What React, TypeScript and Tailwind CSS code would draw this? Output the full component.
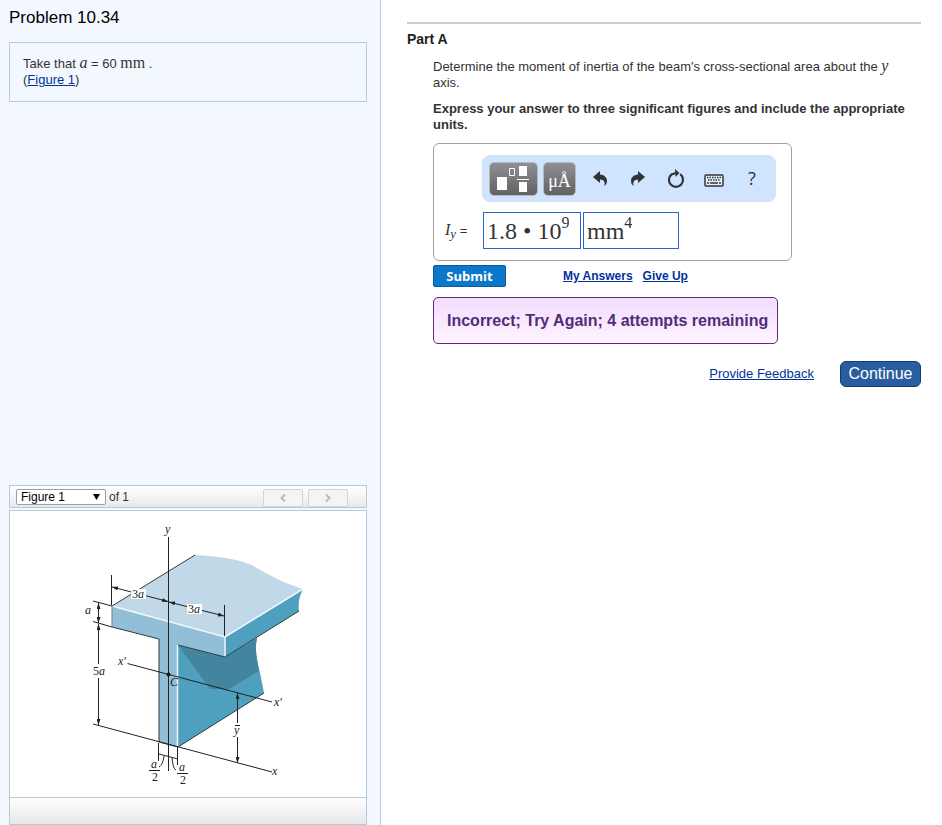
import type { ReactNode } from 'react'

const linkClass = 'text-[#003399] underline'

const MathText = ({ children }: { children: ReactNode }) => (
  <span className="font-['Liberation_Serif',serif] text-[16px] leading-none">{children}</span>
)

interface DimensionProps {
  x1: number
  y1: number
  x2: number
  y2: number
}

const Dimension = ({ x1, y1, x2, y2 }: DimensionProps) => (
  <line x1={x1} y1={y1} x2={x2} y2={y2} stroke="#222" markerStart="url(#arrow)" markerEnd="url(#arrow)" />
)

const BeamFigure = () => (
  <svg
    width="356"
    height="286"
    viewBox="10 511 356 286"
    role="img"
    aria-label="T-shaped beam cross section"
    className="mx-auto block font-['Liberation_Serif',serif] text-[12px]"
  >
    <defs>
      <marker id="arrow" viewBox="0 0 6 4" refX="6" refY="2" markerWidth="6" markerHeight="4" markerUnits="userSpaceOnUse" orient="auto-start-reverse">
        <path d="M0 0 6 2 0 4Z" fill="#222" />
      </marker>
    </defs>

    {/* web */}
    <path d="M178 645 225 657 257 638C254 651 258 664 260 673L264 693 178 747Z" fill="#4fa0bf" />
    <path d="M178 645 225 657 257 638C254 651 258 662 259 671L229 689 210 689Z" fill="#43859f" />
    <path d="M159 638H178V747L159 742Z" fill="#92bfd7" />
    {/* flange */}
    <path d="M112 606 225 636V657L178 645 159 639 112 627Z" fill="#92bfd7" />
    <path d="M225 636 303 589C299 597 298 603 299 611L225 657Z" fill="#4fa0bf" />
    <path d="M112 606 195 555C217 556 238 559 252 565C268 574 283 583 303 589L225 637Z" fill="#c0d8e7" />
    <path d="M112 606 225 637 303 589M225 637V657M177.500 645V747" fill="none" stroke="#f1f8fb" strokeWidth="1.500" />
    <path d="M112 606 195 555M112 627 159 639V742L178 747 264 693M178 645 225 657 299 611" fill="none" stroke="#333b40" />
    <path d="M112 606V627" stroke="#5f8595" />

    {/* axes */}
    <g stroke="#222" fill="none">
      <path d="M168.500 537V771M127.500 663.500 272 702M93 724 272 772" />
      <path d="M111.500 575V605M224.500 605V636M93 601 112 606M93 621.500 112 627" />
      <path d="M158.500 743V761M177.500 747V765M159 754 178 759" />
      <path d="M164 756C163 762 162 765 159 767M172 758C173 764 173 768 176 770" />
    </g>
    <Dimension x1={112} y1={587} x2={168} y2={601.5} />
    <Dimension x1={169} y1={602} x2={224} y2={616} />
    <Dimension x1={98.500} y1={603} x2={98.500} y2={623} />
    <Dimension x1={98.500} y1={624} x2={98.500} y2={725} />
    <Dimension x1={237.500} y1={693} x2={237.500} y2={763} />
    <circle cx="168.500" cy="674.500" r="2" fill="#111" />

    {/* gaps behind the labels */}
    <g fill="#fff">
      <rect x="131" y="589" width="15" height="10" />
      <rect x="187" y="604" width="15" height="10" />
      <rect x="92" y="664" width="14" height="14" />
      <rect x="233" y="723" width="10" height="14" />
    </g>

    <g fill="#222" fontStyle="italic">
      <text x="165" y="533">y</text>
      <text x="132" y="598"><tspan fontStyle="normal">3</tspan>a</text>
      <text x="188" y="613"><tspan fontStyle="normal">3</tspan>a</text>
      <text x="85" y="614">a</text>
      <text x="93" y="675"><tspan fontStyle="normal">5</tspan>a</text>
      <text x="118" y="665">x′</text>
      <text x="274" y="706">x′</text>
      <text x="272" y="775">x</text>
      <text x="170" y="686">C</text>
      <text x="234" y="734">y</text>
      <text x="151" y="768">a</text>
      <text x="152" y="781" fontStyle="normal">2</text>
      <text x="179" y="771">a</text>
      <text x="180" y="784" fontStyle="normal">2</text>
    </g>
    <path d="M149 770.500H160M177 773.500H188M235 725.500H240" stroke="#222" />
  </svg>
)

const ToolbarIcon = ({ label, children }: { label: string; children: ReactNode }) => (
  <button type="button" aria-label={label} className="flex h-[34px] w-[38px] items-center justify-center text-[#333]">
    {children}
  </button>
)

const AnswerToolbar = () => (
  <div className="flex h-[47px] items-center gap-[5px] rounded-lg border border-[#dcdfe4] bg-[#cee4ff] pr-1 pl-[6px]">
    <button
      type="button"
      aria-label="Templates"
      className="flex h-[34px] w-[49px] items-center justify-center rounded-[5px] border border-[#b8b8bd] bg-linear-to-b from-[#8f8f96] to-[#626264]"
    >
      <svg width="34" height="26" viewBox="0 0 34 26">
        <path d="M0 11h10v13H0zM22 0h8v10h-8zM22 16h8v10h-8z" fill="#fff" />
        <path d="M12.500 2.500h5v7h-5zM20 13.500h12" fill="none" stroke="#fff" />
      </svg>
    </button>
    <button
      type="button"
      aria-label="Symbols"
      className="h-[34px] w-[33px] rounded-[5px] border border-[#b8b8bd] bg-linear-to-b from-[#8f8f96] to-[#626264] pt-1 font-['Liberation_Serif',serif] text-[18px] leading-7 text-white"
    >
      μÅ
    </button>
    <div className="flex">
      <ToolbarIcon label="Undo">
        <svg width="14" height="16" viewBox="0 0 14 16" fill="currentColor">
          <path d="M0 6 7 0V3.500C11.500 4 14 6.500 14 10C14 12 13 14 11.500 15C12.300 11 11 8.700 7 8.500V12Z" />
        </svg>
      </ToolbarIcon>
      <ToolbarIcon label="Redo">
        <svg width="14" height="16" viewBox="0 0 14 16" fill="currentColor">
          <path d="M14 6 7 0V3.500C2.500 4 0 6.500 0 10C0 12 1 14 2.500 15C1.700 11 3 8.700 7 8.500V12Z" />
        </svg>
      </ToolbarIcon>
      <ToolbarIcon label="Reset">
        <svg width="18" height="20" viewBox="0 0 18 20">
          <path d="M13.200 5.200A7 7 0 1 1 4.500 5.400L9 4" fill="none" stroke="currentColor" strokeWidth="2.200" />
          <path d="M8 0 12.500 4 8.500 8Z" fill="currentColor" />
        </svg>
      </ToolbarIcon>
      <ToolbarIcon label="Keyboard shortcuts">
        <svg width="20" height="18" viewBox="0 0 20 18" fill="none" stroke="currentColor">
          <rect x="1" y="5" width="18" height="11" rx="1" fill="#e8f2ff" strokeWidth="1.500" />
          <path d="M3 7.500H17M4 10H16" strokeWidth="1.500" strokeDasharray="1.500 1" />
          <path d="M3 13H5M6 13H14M15 13H17" strokeWidth="1.500" />
        </svg>
      </ToolbarIcon>
      <ToolbarIcon label="Help">
        <span className="font-['Open_Sans',sans-serif] text-[18px]">?</span>
      </ToolbarIcon>
    </div>
  </div>
)

interface MathFieldProps {
  label: string
  base: string
  exponent: string
  className: string
}

const MathField = ({ label, base, exponent, className }: MathFieldProps) => (
  <div className={`flex h-[37px] items-start overflow-hidden border border-[#2b63c6] bg-white pl-[3px] font-['Liberation_Serif',serif] text-[#333] ${className}`}>
    <input aria-label={label} defaultValue={base} className="field-sizing-content h-[36px] min-w-0 text-[24px] leading-[36px] outline-none" />
    <input aria-label={`${label} exponent`} defaultValue={exponent} className="field-sizing-content h-[20px] min-w-0 text-[16px] leading-[20px] outline-none" />
  </div>
)

const ProblemPanel = () => (
  <aside className="flex w-[381px] shrink-0 flex-col border-r border-[#b9cbdd] bg-[#f3f8ff] pr-[13px] pl-[9px]">
    <h1 className="mt-2 text-[17px] leading-5 text-black">Problem 10.34</h1>
    <div className="mt-[14px] h-[60px] border border-[#b9cbdd] px-[13px] py-3">
      <p className="leading-4">
        Take that <MathText><i>a</i></MathText> = 60 <MathText>mm</MathText> .
        <br />
        (<a href="#figure" className={linkClass}>Figure 1</a>)
      </p>
    </div>

    <section id="figure" className="mt-auto pt-4">
      <div className="flex h-[23px] items-start justify-between border border-[#b3c9dc] bg-linear-to-b from-white to-[#e9e9e9] pt-[3px] pr-[18px] pl-[6px] text-[12px]">
        <div className="flex h-4 items-center gap-[3px]">
          <div className="relative">
            <select aria-label="Figure" className="block h-4 w-[90px] appearance-none rounded-[2px] border border-[#a0a0a0] bg-white pl-1 leading-[14px] text-black">
              <option>Figure 1</option>
            </select>
            <svg width="7" height="6" viewBox="0 0 7 6" className="pointer-events-none absolute top-[5px] right-[6px]">
              <path d="M0 0H7L3.500 6Z" />
            </svg>
          </div>
          <span>of 1</span>
        </div>
        <div className="flex gap-[5px]">
          <button type="button" aria-label="Previous figure" className="flex h-[18px] w-10 items-center justify-center rounded-[2px] border border-[#d4d4d4] bg-[#f4f4f4]">
            <svg width="6" height="8" viewBox="0 0 6 8" fill="none" stroke="#bbb" strokeWidth="2"><path d="M5 .5 1.500 4 5 7.500" /></svg>
          </button>
          <button type="button" aria-label="Next figure" className="flex h-[18px] w-10 items-center justify-center rounded-[2px] border border-[#d4d4d4] bg-[#f4f4f4]">
            <svg width="6" height="8" viewBox="0 0 6 8" fill="none" stroke="#bbb" strokeWidth="2"><path d="M1 .5 4.500 4 1 7.500" /></svg>
          </button>
        </div>
      </div>
      <div className="mt-[2px] border border-[#b3c9dc] bg-white">
        <BeamFigure />
        <div className="h-[27px] border-t border-[#b3c9dc] bg-linear-to-b from-white to-[#e7e7e7]" />
      </div>
    </section>
  </aside>
)

const PartA = () => (
  <main className="min-w-0 flex-1 pt-[22px] pr-[21px] pl-[26px]">
    <hr className="border-t-2 border-[#ccc]" />
    <h2 className="mt-[5px] text-[14px] leading-5 font-bold text-[#222]">Part A</h2>
    <div className="pl-[26px]">
      <p className="mt-[9px] pr-3 leading-4">
        Determine the moment of inertia of the beam's cross-sectional area about the <MathText><i>y</i></MathText> axis.
      </p>
      <p className="mt-[10px] pr-3 leading-4 font-bold">
        Express your answer to three significant figures and include the appropriate units.
      </p>

      <form>
        <div className="mt-[10px] flex h-[118px] w-[359px] flex-col items-end rounded-md border border-[#a3a3a3] pt-[11px] pr-[15px] pl-[11px]">
          <AnswerToolbar />
          <div className="mt-[10px] flex w-full items-center">
            <span className="w-[38px] whitespace-nowrap">
              <MathText><i>I</i></MathText>
              <sub className="font-['Liberation_Serif',serif] text-[13px] italic">y</sub> =
            </span>
            <MathField label="Value" base="1.8 • 10" exponent="9" className="w-[98px]" />
            <MathField label="Units" base="mm" exponent="4" className="ml-[2px] w-[96px]" />
          </div>
        </div>
        <div className="mt-1 flex h-[22px] items-center">
          <button type="button" className="h-[22px] w-[73px] rounded-[2px] border border-[#085a9b] bg-[#0d78c9] font-['Open_Sans',sans-serif] text-[13px] leading-5 font-bold text-white">
            Submit
          </button>
          <div className="ml-[57px] flex gap-[10px] text-[12px] font-bold">
            <a href="#answers" className={linkClass}>My Answers</a>
            <a href="#give-up" className={linkClass}>Give Up</a>
          </div>
        </div>
      </form>

      <div role="status" className="mt-[10px] flex h-[47px] w-[345px] items-center rounded-[5px] border border-[#6b2580] bg-linear-to-b from-[#f1dcfd] to-[#fff4ff] pl-[13px] text-[16px] font-bold whitespace-nowrap text-[#532b78]">
        Incorrect; Try Again; 4 attempts remaining
      </div>
    </div>
    <div className="mt-[17px] flex items-center justify-end gap-[26px]">
      <a href="#feedback" className={linkClass}>Provide Feedback</a>
      <button type="button" className="h-[26px] w-[81px] rounded-md border border-[#103d70] bg-[#2a5d9f] text-[16px] leading-6 text-white">
        Continue
      </button>
    </div>
  </main>
)

const App = () => (
  <div className="flex min-h-screen bg-white font-['Liberation_Sans',Arial,sans-serif] text-[13px] text-[#333]">
    <ProblemPanel />
    <PartA />
  </div>
)

export default App
